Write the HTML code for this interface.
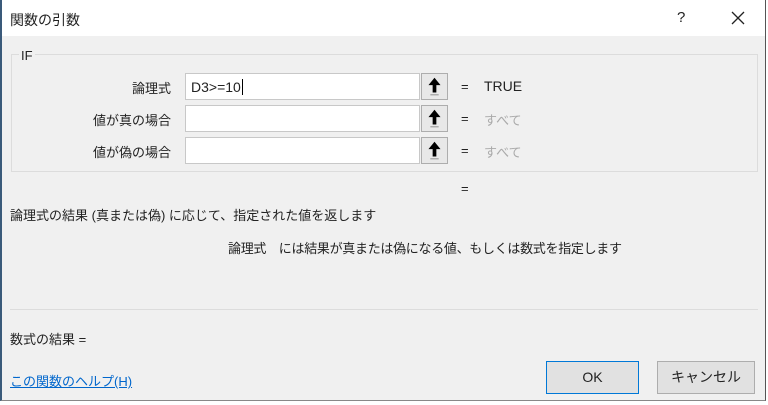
<!DOCTYPE html>
<html><head><meta charset="utf-8"><style>
*{margin:0;padding:0;box-sizing:border-box}
body{width:768px;height:405px;overflow:hidden;background:#fff;font-family:"Liberation Sans","Noto Sans CJK JP",sans-serif;font-size:13px;color:#222;position:relative}
.dlg{position:absolute;left:0;top:0;width:766px;height:401px;background:#f0f0f0;border-left:2px solid #3a5a7a;border-right:1px solid #555;border-bottom:1px solid #888}
.title{position:absolute;left:0;top:0;width:100%;height:36px;background:#fff}
.abs{position:absolute;white-space:nowrap}
.grp{position:absolute;left:9px;top:54px;width:747px;height:118px;border:1px solid #dcdcdc}
.inp{position:absolute;left:183px;width:235px;height:27px;background:#fff;border:1px solid #c8c8c8}
.btn{position:absolute;left:419px;width:27px;height:27px;background:#e8e8e8;border:1px solid #adadad}
.lab{position:absolute;right:594px;font-size:13px}
.btnb{position:absolute;height:33px;background:#e1e1e1;border:1px solid #adadad;text-align:center;line-height:31px;font-size:14px}
</style></head><body>
<div class="dlg">
<div class="title"></div>
<div class="abs" style="left:8px;top:10px;font-size:14px">関数の引数</div>
<div class="abs" style="left:675px;top:9px;font-size:15px">?</div>
<svg class="abs" style="left:729px;top:11px" width="14" height="14"><path d="M1 1L13 13M13 1L1 13" stroke="#222" stroke-width="1.3"/></svg>
<div class="grp"></div>
<div class="abs" style="left:17px;top:48px;font-size:13px;background:#f0f0f0;padding:0 2px">IF</div>
<div class="lab" style="top:78px">論理式</div>
<div class="lab" style="top:110px">値が真の場合</div>
<div class="lab" style="top:142px">値が偽の場合</div>
<div class="inp" style="top:73px"><span class="abs" style="left:5px;top:5px;font-size:14px">D3&gt;=10<span style="border-left:1px solid #000;margin-left:1px"></span></span></div>
<div class="inp" style="top:105px"></div>
<div class="inp" style="top:137px"></div>
<svg class="btn" style="top:73px" viewBox="0 0 27 27"><path d="M13.5 4L7 12H11.5V20H15.5V12H20Z" fill="#000"/><path d="M9 22.5H18" stroke="#888"/></svg>
<svg class="btn" style="top:105px" viewBox="0 0 27 27"><path d="M13.5 4L7 12H11.5V20H15.5V12H20Z" fill="#000"/><path d="M9 22.5H18" stroke="#888"/></svg>
<svg class="btn" style="top:137px" viewBox="0 0 27 27"><path d="M13.5 4L7 12H11.5V20H15.5V12H20Z" fill="#000"/><path d="M9 22.5H18" stroke="#888"/></svg>
<div class="abs" style="left:459px;top:79px">=</div>
<div class="abs" style="left:482px;top:78px;font-size:14px">TRUE</div>
<div class="abs" style="left:459px;top:111px">=</div>
<div class="abs" style="left:482px;top:110px;color:#aaa">すべて</div>
<div class="abs" style="left:459px;top:143px">=</div>
<div class="abs" style="left:482px;top:142px;color:#aaa">すべて</div>
<div class="abs" style="left:459px;top:181px">=</div>
<div class="abs" style="left:8px;top:205px">論理式の結果 (真または偽) に応じて、指定された値を返します</div>
<div class="abs" style="left:226px;top:238px;letter-spacing:-0.3px">論理式　には結果が真または偽になる値、もしくは数式を指定します</div>
<div style="position:absolute;left:8px;top:309px;width:748px;height:1px;background:#dcdcdc"></div>
<div class="abs" style="left:8px;top:329px">数式の結果 =</div>
<div class="abs" style="left:8px;top:371px;color:#0066cc;text-decoration:underline">この関数のヘルプ(H)</div>
<div class="btnb" style="left:544px;top:361px;width:93px;border-color:#0078d7">OK</div>
<div class="btnb" style="left:655px;top:361px;width:98px">キャンセル</div>
</div>
</body></html>
